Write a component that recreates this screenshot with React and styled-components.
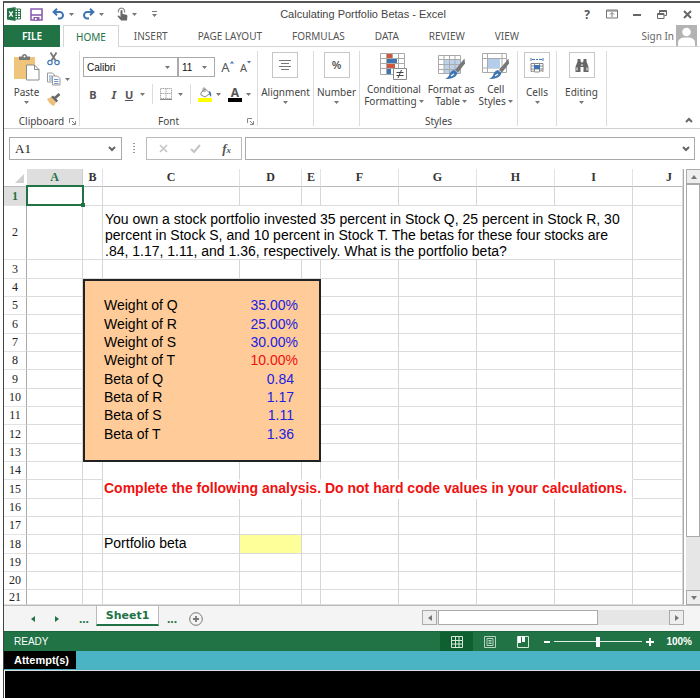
import styled, { createGlobalStyle } from "styled-components";

const GlobalStyle = createGlobalStyle`
  * {
    box-sizing: border-box;
  }
  body {
    margin: 0;
    background: #fff;
    font-family: "Noto Sans", "Open Sans", sans-serif;
    font-size: 10px;
    color: #444;
  }
  button, select, input {
    font: inherit;
    color: inherit;
    margin: 0;
    padding: 0;
  }
  button {
    border: 0;
    background: none;
  }
  svg {
    overflow: visible;
    flex: none;
  }
`;

const StyledPage = styled.div`
  padding: 1px 0 1px 3px;
`;

const StyledWindow = styled.main`
  border-top: 2px solid #555;
  border-left: 1px solid #444;
`;

/* title bar */

const StyledTitleBar = styled.header`
  display: grid;
  grid-template-columns: 152px 1fr 126px;
  align-items: center;
  height: 22px;
  padding: 0 7px 0 3px;
`;

const StyledTitle = styled.h1`
  margin: 0;
  font-family: "Liberation Sans", Arial, sans-serif;
  font-size: 11px;
  font-weight: 400;
  text-align: center;
  color: #444;
`;

const StyledQuickAccess = styled.div`
  display: flex;
  align-items: center;
  gap: ${({ $gap }) => $gap}px;
  justify-content: ${({ $end }) => ($end ? "flex-end" : "flex-start")};
`;

const StyledIconButton = styled.button`
  display: flex;
  align-items: center;
  justify-content: center;
  gap: ${({ $gap = 4 }) => $gap}px;
  height: 16px;
  min-width: ${({ $width = 8 }) => $width}px;
  color: #555;
  font-size: ${({ $size = 10 }) => $size}px;
  font-weight: ${({ $bold }) => ($bold ? 700 : 400)};
`;

/* tabs */

const StyledTabBar = styled.nav`
  display: flex;
  height: 22px;
`;

const StyledFileTab = styled.button`
  width: 56px;
  background: #217346;
  color: #fff;
  font-weight: 600;
`;

const StyledTab = styled.button`
  padding: 0 ${({ $active }) => ($active ? 12 : 15)}px;
  margin-left: ${({ $active }) => ($active ? 3 : 0)}px;
  color: ${({ $active }) => ($active ? "#217346" : "#555")};
  border: solid #d5d5d5;
  border-width: ${({ $active }) => ($active ? "1px 1px 0" : "0 0 1px")};
`;

const StyledTabFill = styled.div`
  flex: 1;
  display: flex;
  align-items: center;
  justify-content: flex-end;
  gap: 2px;
  padding-right: 3px;
  border-bottom: 1px solid #d5d5d5;
  color: #666;
`;

/* ribbon */

const StyledRibbon = styled.section`
  display: flex;
  height: 82px;
  padding-top: 4px;
  border-bottom: 1px solid #d0d0d0;
`;

const StyledGroup = styled.div`
  display: flex;
  flex-direction: column;
  justify-content: space-between;
  width: ${({ $width }) => $width}px;
  margin-bottom: 2px;
  border-right: 1px solid #dcdcdc;
`;

const StyledGroupBody = styled.div`
  display: flex;
  justify-content: center;
  gap: ${({ $gap = 0 }) => $gap}px;
`;

const StyledGroupFooter = styled.div`
  display: grid;
  grid-template-columns: 10px 1fr 10px;
  align-items: center;
  height: 10px;
  line-height: 10px;
  text-align: center;
  white-space: nowrap;

  & > span {
    grid-column: 2;
  }
`;

const StyledBigButton = styled.button`
  display: flex;
  flex-direction: column;
  align-items: center;
  padding-top: ${({ $top = 1 }) => $top}px;
  line-height: 12px;
  white-space: nowrap;

  & > svg:first-child,
  & > span:first-child {
    margin-bottom: ${({ $space = 4 }) => $space}px;
  }
  & > svg:last-child {
    margin-top: 3px;
  }
`;

const StyledBoxed = styled.span`
  display: flex;
  align-items: center;
  justify-content: center;
  width: 26px;
  height: 26px;
  border: 1px solid #c6c6c6;
  font-size: 11px;
  font-weight: 600;
  color: #555;
`;

const StyledInline = styled.span`
  display: flex;
  align-items: center;
  gap: 2px;
`;

const StyledSmallStack = styled.div`
  display: flex;
  flex-direction: column;
  align-items: flex-start;
  gap: 4px;
`;

const StyledFontPanel = styled.div`
  display: flex;
  flex-direction: column;
  gap: 7px;
  padding: 6px 6px 0 3px;
`;

const StyledFontRow = styled.div`
  display: flex;
  align-items: center;
  justify-content: space-between;
`;

const StyledFontBoxes = styled.div`
  display: flex;
`;

const StyledSelectWrap = styled.label`
  display: grid;
  grid-template-columns: 1fr 12px;
  align-items: center;
  width: ${({ $width }) => $width}px;
  height: 20px;
  border: 1px solid #aaa;

  select {
    grid-area: 1 / 1 / 2 / 3;
    appearance: none;
    border: 0;
    background: none;
    padding-left: 3px;
    color: #111;
    font-family: "Liberation Sans", Arial, sans-serif;
    font-size: 10px;
  }
  svg {
    grid-area: 1 / 2;
  }
`;

const StyledDivider = styled.span`
  width: 1px;
  height: 20px;
  background: #dcdcdc;
`;

const StyledRibbonEnd = styled.div`
  flex: 1;
  display: flex;
  align-items: flex-end;
  justify-content: flex-end;
  padding: 0 7px 0 0;
`;

/* formula bar */

const StyledFormulaBar = styled.section`
  display: flex;
  height: 40px;
  padding: 8px 5px 9px 5px;
`;

const StyledNameBox = styled.div`
  display: flex;
  align-items: center;
  width: 113px;
  padding: 0 5px;
  border: 1px solid #aaa;

  input {
    flex: 1;
    min-width: 0;
    border: 0;
    background: none;
    color: #222;
    font-family: "Liberation Serif", serif;
    font-size: 13px;
  }
`;

const StyledDots = styled.span`
  display: flex;
  align-items: center;
  justify-content: center;
  width: 24px;
`;

const StyledFormulaTools = styled.div`
  display: flex;
  align-items: center;
  justify-content: space-between;
  width: 96px;
  padding: 0 10px 0 12px;
  margin-right: 3px;
  border: 1px solid #bbb;
`;

const StyledFormulaInput = styled.div`
  flex: 1;
  display: flex;
  align-items: center;
  padding: 0 4px;
  border: 1px solid #aaa;

  input {
    flex: 1;
    min-width: 0;
    border: 0;
  }
`;

/* sheet */

const StyledSheetArea = styled.section`
  display: flex;
  gap: 2px;
  border-bottom: 1px solid #bbb;
`;

const StyledSheet = styled.table`
  flex: 1;
  width: 0;
  table-layout: fixed;
  border-spacing: 0;
  border-right: 1px solid #aaa;
  font-family: "Liberation Sans", Arial, sans-serif;
  font-size: 14px;
  line-height: 14px;
  color: #000;

  tbody tr {
    height: 18px;
  }
  tbody tr:nth-child(3n),
  tbody tr:first-child {
    height: 19px;
  }
  tbody tr:nth-child(2) {
    height: 54px;
    line-height: 16px;
  }
  tbody tr:last-child {
    height: 15px;
    line-height: 12px;
  }
`;

const StyledColHead = styled.th`
  height: 18px;
  padding: 0 ${({ $end }) => ($end ? 10 : 0)}px 2px 0;
  border-right: 1px solid ${({ $active }) => ($active ? "#ccc" : "#e2e2e2")};
  border-bottom: 1px solid ${({ $active }) => ($active ? "#217346" : "#bbb")};
  background: ${({ $active }) => ($active ? "#dedede" : "#fff")};
  color: ${({ $active }) => ($active ? "#217346" : "#333")};
  font-family: "Liberation Serif", serif;
  font-size: 12px;
  font-weight: 700;
  text-align: ${({ $end }) => ($end ? "right" : "center")};
`;

const StyledCorner = styled.td`
  padding: 0 3px 3px 0;
  border-bottom: 1px solid #bbb;
  text-align: right;
  vertical-align: bottom;

  svg {
    display: block;
    margin-left: auto;
  }
`;

const StyledRowHead = styled.th`
  padding: 0 0 1px;
  border-right: 1px solid #aaa;
  border-bottom: 1px solid #e2e2e2;
  background: ${({ $active }) => ($active ? "#dedede" : "#fff")};
  color: ${({ $active }) => ($active ? "#217346" : "#222")};
  font-family: "Liberation Serif", serif;
  font-size: 12px;
  font-weight: ${({ $active }) => ($active ? 700 : 400)};
`;

const StyledCell = styled.td`
  padding: 0 ${({ $right = 0 }) => $right}px 2px 1px;
  border-right: 1px solid #d6d6d6;
  border-bottom: 1px solid ${({ $open }) => ($open ? "#fff" : "#dcdcdc")};
  background: ${({ $fill = "transparent" }) => $fill};
  color: ${({ $color = "#000" }) => $color};
  font-weight: ${({ $bold }) => ($bold ? 700 : 400)};
  text-align: ${({ $right }) => ($right ? "right" : "left")};
  white-space: nowrap;
`;

const StyledTextCell = styled(StyledCell)`
  padding: 5px 0 0 2px;
  white-space: normal;
`;

const StyledActiveCell = styled(StyledCell)`
  position: relative;
`;

const StyledBoxCell = styled(StyledCell)`
  background: #ffcc99;
  border: 0 solid #222;
  border-width: ${({ $edges }) => $edges};
`;

const StyledSelection = styled.span`
  position: absolute;
  inset: -2px -2px -1px -1px;
  border: 2px solid #217346;

  &::after {
    content: "";
    position: absolute;
    right: -3px;
    bottom: -3px;
    width: 4px;
    height: 4px;
    background: #217346;
  }
`;

const StyledVScroll = styled.div`
  display: flex;
  flex-direction: column;
  width: 14px;
  background: #e6e6e6;
`;

const StyledScrollButton = styled.button`
  display: flex;
  align-items: center;
  justify-content: center;
  width: 15px;
  height: 15px;
  border: 1px solid #aaa;
  background: #eee;
`;

const StyledThumb = styled.div`
  background: #fff;
  border: 1px solid #aaa;
  flex: ${({ $grow }) => $grow};
`;

const StyledTrack = styled.div`
  flex: ${({ $grow }) => $grow};
`;

/* sheet tabs */

const StyledSheetTabs = styled.section`
  display: flex;
  height: 25px;
  background: #f4f4f4;
  color: #217346;
`;

const StyledTabNav = styled.div`
  display: flex;
  align-items: center;
  width: 92px;
  padding: 0 7px 0 26px;
  justify-content: space-between;
`;

const StyledSheetTab = styled.button`
  width: 63px;
  height: 20px;
  background: #fff;
  border: solid #bbb;
  border-width: 0 1px;
  border-bottom: 2px solid #217346;
  font-family: "DejaVu Sans", sans-serif;
  font-size: 11px;
  font-weight: 700;
  color: #217346;
`;

const StyledAfterTabs = styled.div`
  flex: 1;
  display: flex;
  align-items: center;
  gap: 12px;
  padding-left: 8px;
`;

const StyledEllipsis = styled.button`
  height: 16px;
  color: #217346;
  font-size: 12px;
  font-weight: 700;
  line-height: 14px;
`;

const StyledHScroll = styled.div`
  display: flex;
  gap: 1px;
  flex: 0 1 262px;
  height: 15px;
  margin: 4px 16px 0 0;
  background: #e6e6e6;
`;

/* status bar */

const StyledStatusBar = styled.footer`
  display: flex;
  align-items: center;
  justify-content: space-between;
  height: 20px;
  padding: 0 8px 0 10px;
  background: #217346;
  border-top: 1px solid #1b663c;
  color: #fff;
  font-family: "Liberation Sans", Arial, sans-serif;
`;

const StyledStatusTools = styled.div`
  display: flex;
  align-items: center;
`;

const StyledViewButton = styled.button`
  display: flex;
  align-items: center;
  justify-content: center;
  width: 33px;
  height: 19px;
  background: ${({ $active }) => ($active ? "#0f6030" : "none")};
`;

const StyledZoomButton = styled.button`
  display: flex;
  align-items: center;
  justify-content: center;
  width: 15px;
  height: 16px;
`;

const StyledZoomSlider = styled.input`
  appearance: none;
  width: 88px;
  height: 10px;
  background: linear-gradient(#dfeee5, #dfeee5) center / 100% 1px no-repeat;

  &::-webkit-slider-thumb {
    appearance: none;
    width: 4px;
    height: 10px;
    background: #fff;
  }
`;

const StyledZoomValue = styled.span`
  padding-left: 9px;
  font-weight: 700;
`;

const StyledAttemptBar = styled.div`
  height: 20px;
  background: #4bb4c4;
  border-bottom: 1px solid #ddd;
`;

const StyledAttempt = styled.div`
  width: 72px;
  height: 18px;
  padding-left: 10px;
  background: #000;
  color: #fff;
  font-family: "Liberation Sans", Arial, sans-serif;
  font-size: 11px;
  font-weight: 700;
  line-height: 18px;
`;

const StyledAnswerPanel = styled.div`
  height: 27px;
  margin-left: 1px;
  background: #000;
`;

const Caret = ({ color = "#777" }) => (
  <svg width="5" height="3" viewBox="0 0 5 3">
    <path d="M0 0h5L2.5 3z" fill={color} />
  </svg>
);

const Chevron = ({ up }) => (
  <svg width="8" height="6" viewBox="0 0 8 6" fill="none" stroke="#666" strokeWidth="2">
    <path d={up ? "M1 5l3-3 3 3" : "M1 1l3 3 3-3"} />
  </svg>
);

const Arrow = ({ dir, color = "#777" }) => {
  const paths = {
    up: "M0 5h6L3 1z",
    down: "M0 1h6L3 5z",
    left: "M5 0v6L1 3z",
    right: "M1 0v6l4-3z",
  };
  return (
    <svg width="6" height="6" viewBox="0 0 6 6">
      <path d={paths[dir]} fill={color} />
    </svg>
  );
};

const ExcelIcon = () => (
  <svg width="14" height="14" viewBox="0 0 14 14">
    <path d="M7 2h6.5v10H7z" fill="#fff" stroke="#217346" />
    <path d="M8 4.5h5M8 7h5M8 9.5h5M10.5 2v10" stroke="#217346" />
    <path d="M0 1.5L8.5 0v14L0 12.5z" fill="#217346" />
    <path d="M2.2 4.3l3.6 5.4M5.8 4.3L2.2 9.7" stroke="#fff" strokeWidth="1.3" />
  </svg>
);

const SaveIcon = () => (
  <svg width="13" height="13" viewBox="0 0 13 13">
    <path d="M1 1h11v11H1z" fill="#fff" stroke="#8a5fb0" strokeWidth="1.6" />
    <path d="M1 6.200h11v1.600H1z" fill="#8a5fb0" />
    <path d="M3.500 9h6v3.500h-6z" fill="#8a5fb0" />
    <path d="M5 10h1.500v2H5z" fill="#fff" />
  </svg>
);

const UndoIcon = ({ flip }) => (
  <svg width="13" height="12" viewBox="0 0 13 12" fill="none" stroke="#3f74b3" strokeWidth="2">
    <g transform={flip ? "translate(13 0) scale(-1 1)" : undefined}>
      <path d="M1.5 4h6.2a3.3 3.3 0 010 6.6H6" />
      <path d="M5 .7L1.6 4 5 7.3" />
    </g>
  </svg>
);

const TouchIcon = () => (
  <svg width="11" height="14" viewBox="0 0 11 14">
    <path d="M1.5 5.5a3.2 3.2 0 116 0" fill="none" stroke="#8a8a8a" strokeWidth="1.2" />
    <path
      d="M3.5 3.5q1-1 2 0V7l4 .8q1 .4.9 1.4L10 13.5H4.2L.6 9.6q0-1.2 1.2-1L3.5 10z"
      fill="#666"
    />
  </svg>
);

const CustomizeIcon = () => (
  <svg width="5" height="6" viewBox="0 0 5 6">
    <path d="M0 0h5v1H0zM0 3h5L2.5 6z" fill="#777" />
  </svg>
);

const RibbonOptionsIcon = () => (
  <svg width="12" height="10" viewBox="0 0 12 10" fill="none" stroke="#777">
    <path d="M.5 1h11v8H.5zM.5 2h11M6 8V4M4 5.5l2-2 2 2" />
  </svg>
);

const MinimizeIcon = () => (
  <svg width="8" height="8" viewBox="0 0 8 8">
    <path d="M0 4h8v2H0z" fill="#666" />
  </svg>
);

const RestoreIcon = () => (
  <svg width="10" height="9" viewBox="0 0 10 9" fill="none" stroke="#666">
    <path d="M2.5 3V.5h7v5H7.5M2.5 1.5h7M.5 3.5h6.5v5H.5zM.5 4.5H7" />
  </svg>
);

const CloseIcon = () => (
  <svg width="9" height="9" viewBox="0 0 9 9" stroke="#666" strokeWidth="2">
    <path d="M1 1l7 7M8 1L1 8" />
  </svg>
);

const AvatarIcon = () => (
  <svg width="21" height="21" viewBox="0 0 21 21">
    <path d="M0 0h21v21H0z" fill="#b3b3b3" />
    <circle cx="10.5" cy="7" r="4.3" fill="#fff" />
    <path d="M2 21v-3q0-5 6-5.5h5q6 .5 6 5.5v3z" fill="#fff" />
  </svg>
);

const PasteIcon = () => (
  <svg width="26" height="27" viewBox="0 0 26 27">
    <path d="M0 3h21v22H0z" fill="#efc57b" />
    <path d="M5 6V2.5h3Q8 0 10.5 0T13 2.5h3V6z" fill="#777" />
    <circle cx="10.5" cy="2.5" r="1" fill="#fff" />
    <path d="M12.5 11h8l4.5 4.5V26H12.5z" fill="#fff" stroke="#8a8a8a" />
    <path d="M20.5 11v4.5H25" fill="none" stroke="#8a8a8a" />
  </svg>
);

const CutIcon = () => (
  <svg width="13" height="14" viewBox="0 0 13 14" fill="none">
    <path d="M3.5.5l5 8M9.5.5l-5 8" stroke="#777" strokeWidth="1.8" />
    <circle cx="3" cy="10.5" r="2.2" stroke="#3f74b3" strokeWidth="1.2" />
    <circle cx="10" cy="10.5" r="2.2" stroke="#3f74b3" strokeWidth="1.2" />
  </svg>
);

const CopyIcon = () => (
  <svg width="14" height="14" viewBox="0 0 14 14" fill="#fff" stroke="#999">
    <path d="M.5 1h5l2 2v7h-7z" />
    <path d="M2 4h3M2 6h3M2 8h3" stroke="#6b95c8" />
    <path d="M5.5 4h5l2.5 2.5V13H5.5z" />
    <path d="M7 7.5h4.5M7 9.5h4.5M7 11.5h4.5" stroke="#6b95c8" />
  </svg>
);

const PainterIcon = () => (
  <svg width="14" height="13" viewBox="0 0 14 13">
    <path d="M0 6l4-2 5 5-2 4q-4-1-7-7z" fill="#efc07a" />
    <path d="M4 4l2-1.5 5 5L9.5 9.5z" fill="#666" />
    <path d="M8 5l4.5-4" stroke="#666" strokeWidth="2.6" />
  </svg>
);

const LauncherIcon = () => (
  <svg width="7" height="7" viewBox="0 0 7 7" fill="none" stroke="#888">
    <path d="M.5 5V.5H5M3 3l3 3M6.5 3v3.5H3" />
  </svg>
);

const SizeMark = ({ down }) => (
  <svg width="4" height="12" viewBox="0 0 4 12">
    <path d={down ? "M0 0h4L2 2.5z" : "M0 2.5h4L2 0z"} fill="#3f74b3" />
  </svg>
);

const BordersIcon = () => (
  <svg width="12" height="12" viewBox="0 0 12 12" fill="none" stroke="#aaa">
    <path d="M.5.5h11v10H.5zM6 .5v10M.5 5.5h11" strokeDasharray="1.5 .5" />
    <path d="M0 11.5h12" stroke="#888" />
  </svg>
);

const FillIcon = () => (
  <svg width="14" height="15" viewBox="0 0 14 15">
    <path d="M3 5.5L7.5 2 12 6.5 7 10 3 8z" fill="#fff" stroke="#888" />
    <path d="M5 5V1.500Q6 0 7 1.500V5" fill="none" stroke="#888" />
    <path d="M11 4q3 1 2 6-2-2-2-4z" fill="#3f74b3" />
    <path d="M0 11h14v4H0z" fill="#ffff00" />
  </svg>
);

const StyledFontColor = styled.span`
  width: 14px;
  height: 15px;
  border-bottom: 4px solid #000;
  font-size: 12px;
  line-height: 11px;
  text-align: center;
`;

const AlignIcon = () => (
  <svg width="12" height="10" viewBox="0 0 12 10" stroke="#777">
    <path d="M0 .5h12M2 3.5h8M0 6.5h12M2 9.5h8" />
  </svg>
);

const ConditionalIcon = () => (
  <svg width="27" height="27" viewBox="0 0 27 27">
    <path d="M1 1h24v20H1z" fill="#fff" />
    <path d="M7 1h6v5H7zM7 11h8v5H7z" fill="#d0563c" />
    <path d="M7 6h10v5H7zM7 16h4v5H7z" fill="#3f74b3" />
    <path
      d="M.5.5h24v21H.5zM6.5.5v21M12.5.5v5M18.5.5v21M.5 5.5h24M.5 10.500h24M.5 15.500h24"
      fill="none"
      stroke="#aaa"
    />
    <path d="M13.5 15.5h13v11h-13z" fill="#fff" stroke="#888" />
    <path d="M16.5 19.5h7M16.5 22.5h7M21.5 17l-3.5 8" stroke="#444" />
  </svg>
);

const Brush = () => (
  <g>
    <path d="M26.5 5.5L17 17l3 2.5 7-9z" fill="#777" />
    <path d="M16 17l3.5 3Q18 26 7 26q4-2 4.5-5Q13 17.5 16 17z" fill="#3f74b3" />
    <path d="M13 23l3-2" stroke="#fff" strokeWidth="1.2" />
  </g>
);

const FormatTableIcon = () => (
  <svg width="27" height="27" viewBox="0 0 27 27">
    <path d="M1 2h22v18H1z" fill="#fff" />
    <path d="M6 6h17v14H6z" fill="#bcd2ea" />
    <path
      d="M.5 2.5h22v18H.5zM6 2.5v18M11.5 2.5v18M17 2.5v18M.5 6.5h22M.5 11.5h22M.5 16.5h22"
      fill="none"
      stroke="#aaa"
    />
    <Brush />
  </svg>
);

const CellStylesIcon = () => (
  <svg width="27" height="27" viewBox="0 0 27 27">
    <path
      d="M.5.5h24v19H.5zM5.5.5v19M20 .5v19M.5 5.5h24M.5 15h24"
      fill="#fff"
      stroke="#aaa"
    />
    <path d="M6 6h12v9H6z" fill="#b4cdea" />
    <Brush />
  </svg>
);

const CellsIcon = () => (
  <svg width="14" height="15" viewBox="0 0 14 15" fill="none">
    <path d="M1 0v3M13 0v3M2 1.5h3M6 1.5h2M9 1.5h3" stroke="#3f74b3" />
    <path
      d="M1 5.5h12v8l-2-1-2 1.5H5l-2-1-2 .5zM4.5 5.5v8M9.5 5.5v8M1 8h12M1 11h12"
      stroke="#888"
    />
    <path d="M4 7h6v4H4z" fill="#3f74b3" />
  </svg>
);

const BinocularsIcon = () => (
  <svg width="14" height="13" viewBox="0 0 14 13">
    <path
      d="M2.5 0h3v2L7 4l1.5-2V0h3v2.5L13.5 8v5h-5V8h-3v5h-5V8l2-5.5z"
      fill="#666"
    />
    <path d="M2 8.5v3M12 8.5v3M7 5v2" stroke="#fff" />
  </svg>
);

const StyledFx = styled.i`
  font-family: "Liberation Serif", serif;
  font-size: 13px;
  font-weight: 700;

  small {
    font-size: 9px;
  }
`;

const ribbonTabs = ["INSERT", "PAGE LAYOUT", "FORMULAS", "DATA", "REVIEW", "VIEW"];
const columns = ["A", "B", "C", "D", "E", "F", "G", "H", "I", "J"];
const colWidths = [23, 56, 20, 137, 62, 19, 78, 78, 78, 78];
const rowNumbers = Array.from({ length: 21 }, (_, i) => i + 1);

const inputs = {
  5: ["Weight of Q", "35.00%"],
  6: ["Weight of R", "25.00%"],
  7: ["Weight of S", "30.00%"],
  8: ["Weight of T", "10.00%", "#f01010"],
  9: ["Beta of Q", "0.84"],
  10: ["Beta of R", "1.17"],
  11: ["Beta of S", "1.11"],
  12: ["Beta of T", "1.36"],
};

function TitleBar() {
  return (
    <StyledTitleBar>
      <StyledQuickAccess $gap={10}>
        <ExcelIcon />
        <StyledIconButton aria-label="Save">
          <SaveIcon />
        </StyledIconButton>
        <StyledIconButton aria-label="Undo">
          <UndoIcon />
          <Caret />
        </StyledIconButton>
        <StyledIconButton aria-label="Redo">
          <UndoIcon flip />
          <Caret />
        </StyledIconButton>
        <StyledIconButton aria-label="Touch mode" $width={28}>
          <TouchIcon />
          <Caret />
        </StyledIconButton>
        <StyledIconButton aria-label="Customize toolbar">
          <CustomizeIcon />
        </StyledIconButton>
      </StyledQuickAccess>
      <StyledTitle>Calculating Portfolio Betas - Excel</StyledTitle>
      <StyledQuickAccess $gap={13} $end>
        <StyledIconButton aria-label="Help" $width={12} $bold $size={12}>
          ?
        </StyledIconButton>
        <StyledIconButton aria-label="Ribbon options" $width={12}>
          <RibbonOptionsIcon />
        </StyledIconButton>
        <StyledIconButton aria-label="Minimize" $width={12}>
          <MinimizeIcon />
        </StyledIconButton>
        <StyledIconButton aria-label="Restore" $width={12}>
          <RestoreIcon />
        </StyledIconButton>
        <StyledIconButton aria-label="Close" $width={12}>
          <CloseIcon />
        </StyledIconButton>
      </StyledQuickAccess>
    </StyledTitleBar>
  );
}

function TabBar() {
  return (
    <StyledTabBar>
      <StyledFileTab>FILE</StyledFileTab>
      <StyledTab $active>HOME</StyledTab>
      {ribbonTabs.map((tab) => (
        <StyledTab key={tab}>{tab}</StyledTab>
      ))}
      <StyledTabFill>
        <span>Sign In</span>
        <AvatarIcon />
      </StyledTabFill>
    </StyledTabBar>
  );
}

function Group({ width, label, launcher, gap, children }) {
  return (
    <StyledGroup $width={width}>
      <StyledGroupBody $gap={gap}>{children}</StyledGroupBody>
      {label && (
        <StyledGroupFooter>
          <span>{label}</span>
          {launcher && <LauncherIcon />}
        </StyledGroupFooter>
      )}
    </StyledGroup>
  );
}

function BoxedButton({ label, children }) {
  return (
    <StyledBigButton $space={8}>
      <StyledBoxed>{children}</StyledBoxed>
      {label}
      <Caret />
    </StyledBigButton>
  );
}

function StyleButton({ icon, first, second }) {
  return (
    <StyledBigButton $top={2} $space={3}>
      {icon}
      {first}
      <StyledInline>
        {second}
        <Caret />
      </StyledInline>
    </StyledBigButton>
  );
}

function Ribbon() {
  return (
    <StyledRibbon>
      <Group width={76} label="Clipboard" launcher gap={7}>
        <StyledBigButton $top={3} $space={5}>
          <PasteIcon />
          Paste
          <Caret />
        </StyledBigButton>
        <StyledSmallStack>
          <StyledIconButton aria-label="Cut">
            <CutIcon />
          </StyledIconButton>
          <StyledIconButton aria-label="Copy">
            <CopyIcon />
            <Caret />
          </StyledIconButton>
          <StyledIconButton aria-label="Format painter">
            <PainterIcon />
          </StyledIconButton>
        </StyledSmallStack>
      </Group>
      <StyledGroup $width={178}>
        <StyledFontPanel>
          <StyledFontRow>
            <StyledFontBoxes>
              <StyledSelectWrap $width={95}>
                <select aria-label="Font name">
                  <option>Calibri</option>
                </select>
                <Caret />
              </StyledSelectWrap>
              <StyledSelectWrap $width={37}>
                <select aria-label="Font size">
                  <option>11</option>
                </select>
                <Caret />
              </StyledSelectWrap>
            </StyledFontBoxes>
            <StyledIconButton $gap={0} $size={13}>
              A
              <SizeMark />
            </StyledIconButton>
            <StyledIconButton $gap={0} $size={11}>
              A
              <SizeMark down />
            </StyledIconButton>
          </StyledFontRow>
          <StyledFontRow>
            <StyledIconButton $width={20} $bold $size={11}>
              B
            </StyledIconButton>
            <StyledIconButton $width={8} $bold $size={11}>
              <i>I</i>
            </StyledIconButton>
            <StyledIconButton $bold $gap={7} $size={11}>
              <u>U</u>
              <Caret />
            </StyledIconButton>
            <StyledDivider />
            <StyledIconButton aria-label="Borders" $gap={6}>
              <BordersIcon />
              <Caret />
            </StyledIconButton>
            <StyledDivider />
            <StyledIconButton aria-label="Fill color">
              <FillIcon />
              <Caret />
            </StyledIconButton>
            <StyledIconButton $bold>
              <StyledFontColor>A</StyledFontColor>
              <Caret />
            </StyledIconButton>
          </StyledFontRow>
        </StyledFontPanel>
        <StyledGroupFooter>
          <span>Font</span>
          <LauncherIcon />
        </StyledGroupFooter>
      </StyledGroup>
      <Group width={56}>
        <BoxedButton label="Alignment">
          <AlignIcon />
        </BoxedButton>
      </Group>
      <Group width={46}>
        <BoxedButton label="Number">%</BoxedButton>
      </Group>
      <Group width={158} label="Styles" gap={4}>
        <StyleButton icon={<ConditionalIcon />} first="Conditional" second="Formatting" />
        <StyleButton icon={<FormatTableIcon />} first="Format as" second="Table" />
        <StyleButton icon={<CellStylesIcon />} first="Cell" second="Styles" />
      </Group>
      <Group width={39}>
        <BoxedButton label="Cells">
          <CellsIcon />
        </BoxedButton>
      </Group>
      <Group width={50}>
        <BoxedButton label="Editing">
          <BinocularsIcon />
        </BoxedButton>
      </Group>
      <StyledRibbonEnd>
        <StyledIconButton aria-label="Collapse ribbon">
          <Chevron up />
        </StyledIconButton>
      </StyledRibbonEnd>
    </StyledRibbon>
  );
}

function FormulaBar() {
  return (
    <StyledFormulaBar>
      <StyledNameBox>
        <input aria-label="Name box" defaultValue="A1" />
        <Chevron />
      </StyledNameBox>
      <StyledDots>
        <svg width="2" height="11" viewBox="0 0 2 11" fill="#999">
          <path d="M0 0h2v1H0zM0 3h2v1H0zM0 6h2v1H0zM0 9h2v1H0z" />
        </svg>
      </StyledDots>
      <StyledFormulaTools>
        <StyledIconButton aria-label="Cancel">
          <svg width="9" height="9" viewBox="0 0 9 9" stroke="#c4c4c4" strokeWidth="1.6">
            <path d="M1 1l7 7M8 1L1 8" />
          </svg>
        </StyledIconButton>
        <StyledIconButton aria-label="Enter">
          <svg width="11" height="9" viewBox="0 0 11 9" fill="none" stroke="#c4c4c4" strokeWidth="2">
            <path d="M1 5l3 3 6-7" />
          </svg>
        </StyledIconButton>
        <StyledIconButton aria-label="Insert function">
          <StyledFx>
            f<small>x</small>
          </StyledFx>
        </StyledIconButton>
      </StyledFormulaTools>
      <StyledFormulaInput>
        <input aria-label="Formula" />
        <Chevron />
      </StyledFormulaInput>
    </StyledFormulaBar>
  );
}

function BoxCells({ row }) {
  const top = row === 4 ? "2px" : "0";
  const bottom = row === 13 ? "2px" : "0";
  const [label, value, color = "#2020e0"] = inputs[row] || [];
  return (
    <>
      <StyledBoxCell $edges={`${top} 0 ${bottom} 2px`} />
      <StyledBoxCell $edges={`${top} 0 ${bottom} 0`}>{label}</StyledBoxCell>
      <StyledBoxCell
        $edges={`${top} 0 ${bottom} 0`}
        $color={color}
        $right={value && value.endsWith("%") ? 4 : 8}
      >
        {value}
      </StyledBoxCell>
      <StyledBoxCell $edges={`${top} 2px ${bottom} 0`} />
    </>
  );
}

function RowCells({ row }) {
  const blanks = (from) =>
    columns
      .slice(from)
      .map((col, i) => <StyledCell key={col} $open={row === 14 && from + i > 1 && from + i < 9} />);

  if (row === 1) {
    return (
      <>
        <StyledActiveCell>
          <StyledSelection />
        </StyledActiveCell>
        {blanks(1)}
      </>
    );
  }
  if (row === 2 || row === 15) {
    return (
      <>
        <StyledCell />
        <StyledCell />
        {row === 2 ? (
          <StyledTextCell colSpan={7}>
            You own a stock portfolio invested 35 percent in Stock Q, 25 percent in Stock R, 30
            percent in Stock S, and 10 percent in Stock T. The betas for these four stocks are .84,
            1.17, 1.11, and 1.36, respectively. What is the portfolio beta?
          </StyledTextCell>
        ) : (
          <StyledCell colSpan={7} $open $bold $color="#f01010">
            Complete the following analysis. Do not hard code values in your calculations.
          </StyledCell>
        )}
        <StyledCell />
      </>
    );
  }
  if (row >= 4 && row <= 13) {
    return (
      <>
        <StyledCell />
        <BoxCells row={row} />
        {blanks(5)}
      </>
    );
  }
  if (row === 18) {
    return (
      <>
        <StyledCell />
        <StyledCell />
        <StyledCell>Portfolio beta</StyledCell>
        <StyledCell $fill="#ffff99" />
        {blanks(4)}
      </>
    );
  }
  return blanks(0);
}

function Sheet() {
  return (
    <StyledSheetArea>
      <StyledSheet>
        <colgroup>
          {colWidths.map((width, i) => (
            <col key={i} width={width} />
          ))}
          <col />
        </colgroup>
        <thead>
          <tr>
            <StyledCorner>
              <svg width="9" height="9" viewBox="0 0 9 9">
                <path d="M9 0v9H0z" fill="#d0d0d0" />
              </svg>
            </StyledCorner>
            {columns.map((col) => (
              <StyledColHead key={col} scope="col" $active={col === "A"} $end={col === "J"}>
                {col}
              </StyledColHead>
            ))}
          </tr>
        </thead>
        <tbody>
          {rowNumbers.map((row) => (
            <tr key={row}>
              <StyledRowHead scope="row" $active={row === 1}>
                {row}
              </StyledRowHead>
              <RowCells row={row} />
            </tr>
          ))}
        </tbody>
      </StyledSheet>
      <StyledVScroll>
        <StyledScrollButton aria-label="Scroll up">
          <Arrow dir="up" />
        </StyledScrollButton>
        <StyledThumb $grow={352} />
        <StyledTrack $grow={53} />
        <StyledScrollButton aria-label="Scroll down">
          <Arrow dir="down" />
        </StyledScrollButton>
      </StyledVScroll>
    </StyledSheetArea>
  );
}

function SheetTabs() {
  return (
    <StyledSheetTabs>
      <StyledTabNav>
        <StyledIconButton aria-label="Previous sheet" $width={4}>
          <Arrow dir="left" color="#217346" />
        </StyledIconButton>
        <StyledIconButton aria-label="Next sheet" $width={4}>
          <Arrow dir="right" color="#217346" />
        </StyledIconButton>
        <StyledEllipsis>...</StyledEllipsis>
      </StyledTabNav>
      <StyledSheetTab>Sheet1</StyledSheetTab>
      <StyledAfterTabs>
        <StyledEllipsis>...</StyledEllipsis>
        <StyledIconButton aria-label="New sheet">
          <svg width="14" height="14" viewBox="0 0 14 14" fill="none" stroke="#777">
            <circle cx="7" cy="7" r="6.3" />
            <path d="M7 4v6M4 7h6" strokeWidth="1.8" />
          </svg>
        </StyledIconButton>
      </StyledAfterTabs>
      <StyledHScroll>
        <StyledScrollButton aria-label="Scroll left">
          <Arrow dir="left" />
        </StyledScrollButton>
        <StyledThumb $grow={160} />
        <StyledTrack $grow={70} />
        <StyledScrollButton aria-label="Scroll right">
          <Arrow dir="right" />
        </StyledScrollButton>
      </StyledHScroll>
    </StyledSheetTabs>
  );
}

function StatusBar() {
  return (
    <StyledStatusBar>
      <span>READY</span>
      <StyledStatusTools>
        <StyledViewButton aria-label="Normal view" $active>
          <svg width="12" height="12" viewBox="0 0 12 12" fill="none" stroke="#d5ead9">
            <path d="M.5.5h11v11H.5zM4.5 0v12M8 0v12M0 4.5h12M0 8h12" />
          </svg>
        </StyledViewButton>
        <StyledViewButton aria-label="Page layout view">
          <svg width="12" height="12" viewBox="0 0 12 12" fill="none" stroke="#b5d3c0">
            <path d="M.5.5h11v11H.5zM3 2.5h6v7H3zM4.5 4.5h3M4.5 6h3M4.5 7.5h3" />
          </svg>
        </StyledViewButton>
        <StyledViewButton aria-label="Page break preview">
          <svg width="12" height="12" viewBox="0 0 12 12">
            <path d="M.5.5h11v11H.5z" fill="none" stroke="#d5ead9" />
            <path d="M1 0h3v7H1zM5 0h3v6H5z" fill="#fff" />
          </svg>
        </StyledViewButton>
        <StyledZoomButton aria-label="Zoom out">
          <svg width="6" height="6" viewBox="0 0 6 6">
            <path d="M0 2h6v2H0z" fill="#fff" />
          </svg>
        </StyledZoomButton>
        <StyledZoomSlider type="range" aria-label="Zoom" min="0" max="200" defaultValue="100" />
        <StyledZoomButton aria-label="Zoom in">
          <svg width="8" height="8" viewBox="0 0 8 8">
            <path d="M0 3h8v2H0zM3 0h2v8H3z" fill="#fff" />
          </svg>
        </StyledZoomButton>
        <StyledZoomValue>100%</StyledZoomValue>
      </StyledStatusTools>
    </StyledStatusBar>
  );
}

function App() {
  return (
    <StyledPage>
      <GlobalStyle />
      <StyledWindow>
        <TitleBar />
        <TabBar />
        <Ribbon />
        <FormulaBar />
        <Sheet />
        <SheetTabs />
        <StatusBar />
        <StyledAttemptBar>
          <StyledAttempt>Attempt(s)</StyledAttempt>
        </StyledAttemptBar>
        <StyledAnswerPanel />
      </StyledWindow>
    </StyledPage>
  );
}

export default App;
